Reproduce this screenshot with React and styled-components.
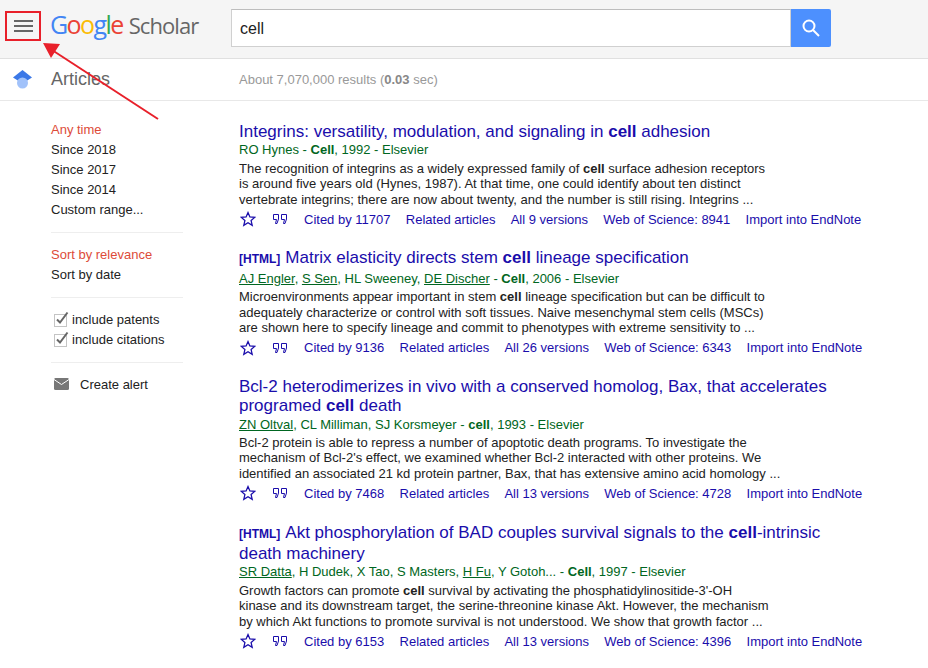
import { styled, createGlobalStyle } from 'styled-components'

const GlobalStyle = createGlobalStyle`
  * {
    margin: 0;
    padding: 0;
    box-sizing: border-box;
  }
  html, body {
    background: #fff;
    overflow: hidden;
  }
  body {
    font-family: 'Liberation Sans', Arial, sans-serif;
    font-size: 13px;
    color: #222;
  }
`

const Page = styled.div`
  position: relative;
  width: 928px;
  height: 668px;
  overflow: hidden;
`
const Header = styled.header`
  height: 59px;
  background: #f5f5f5;
  border-bottom: 1px solid #e0e0e0;
  display: flex;
  align-items: flex-start;
`
const MenuBox = styled.div`
  width: 36px;
  height: 30px;
  margin: 11px 0 0 5px;
  border: 2px solid #e8202a;
  display: flex;
  align-items: center;
  justify-content: center;
`
const Logo = styled.div`
  margin: 9px 0 0 9px;
  width: 181px;
  font-family: 'Open Sans', sans-serif;
  font-size: 22px;
  line-height: 30px;
  letter-spacing: -0.9px;
  white-space: nowrap;
  color: #666;
`
const GoogleWord = styled.span`
  font-size: 25px;
  font-weight: 500;
  letter-spacing: -1.6px;
  margin-right: 6px;
`
const Letter = styled.span`
  color: ${(p) => p.$c};
`
const SearchBox = styled.div`
  margin: 9px 0 0 0;
  width: 560px;
  height: 38px;
  border: 1px solid #d0d0d0;
  border-top-color: #bdbdbd;
  background: #fff;
  font-size: 16px;
  line-height: 38px;
  padding-left: 8px;
  color: #222;
`
const SearchButton = styled.div`
  margin-top: 9px;
  width: 40px;
  height: 38px;
  background: #4d90fe;
  border-radius: 0 2px 2px 0;
  display: flex;
  align-items: center;
  justify-content: center;
`
const SubBar = styled.div`
  height: 42px;
  border-bottom: 1px solid #e8e8e8;
  display: flex;
  align-items: center;
`
const CapIcon = styled.svg`
  margin-left: 13px;
  width: 20px;
  height: 20px;
`
const SubTitle = styled.div`
  margin-left: 18px;
  width: 188px;
  font-size: 18px;
  color: #666;
`
const Count = styled.div`
  color: #999;
  b {
    color: #888;
  }
`
const Body = styled.div`
  display: flex;
`
const Sidebar = styled.aside`
  margin-left: 51px;
  width: 132px;
  padding-top: 19px;
`
const SideGroup = styled.div`
  padding-bottom: 12px;
  margin-bottom: 12px;
  border-bottom: 1px solid #eee;
`
const CheckGroup = styled(SideGroup)`
  margin-top: -1px;
  padding-bottom: 13px;
  margin-bottom: 11px;
`
const SideItem = styled.div`
  height: 20px;
  line-height: 20px;
  color: ${(p) => (p.$active ? '#dd4b39' : '#222')};
  white-space: nowrap;
`
const CheckRow = styled.div`
  height: 20px;
  display: flex;
  align-items: center;
  gap: 3px;
  padding-left: 2px;
`
const CheckIcon = styled.svg`
  width: 16px;
  height: 16px;
`
const AlertRow = styled.div`
  height: 20px;
  display: flex;
  align-items: center;
  gap: 11px;
  padding-left: 3px;
`
const Results = styled.main`
  margin-left: 56px;
  width: 640px;
  padding-top: 21px;
`
const Result = styled.article`
  margin-bottom: 19.4px;
`
const Title = styled.h3`
  font-weight: normal;
  font-size: 17px;
  line-height: 19.3px;
  color: #1a0dab;
  b {
    font-weight: bold;
  }
`
const Tag = styled.span`
  font-size: 12px;
  font-weight: bold;
  margin-right: 5px;
`
const Authors = styled.div`
  line-height: 17px;
  color: #006621;
  b {
    font-weight: bold;
  }
  u {
    text-decoration: underline;
  }
`
const Snippet = styled.div`
  margin-top: 2.4px;
  line-height: 15.6px;
  color: #222;
  white-space: pre;
  b {
    font-weight: bold;
  }
`
const Actions = styled.div`
  margin-top: 1.6px;
  height: 20px;
  display: flex;
  align-items: center;
  color: #1a0dab;
  white-space: nowrap;
`
const ActionIcon = styled.svg`
  flex: none;
  width: 16px;
  height: 16px;
  margin-left: ${(p) => p.$left}px;
`
const ActionLink = styled.span`
  margin-left: ${(p) => p.$left || 15.3}px;
`
const ArrowSvg = styled.svg`
  position: absolute;
  left: 0;
  top: 0;
  width: 200px;
  height: 140px;
  pointer-events: none;
`

const results = [
  {
    title: <>Integrins: versatility, modulation, and signaling in <b>cell</b> adhesion</>,
    authors: <>RO Hynes - <b>Cell</b>, 1992 - Elsevier</>,
    snippet: <>The recognition of integrins as a widely expressed family of <b>cell</b> surface adhesion receptors{'\n'}is around five years old (Hynes, 1987). At that time, one could identify about ten distinct{'\n'}vertebrate integrins; there are now about twenty, and the number is still rising. Integrins ...</>,
    cited: 11707, versions: 9, wos: 8941,
  },
  {
    tag: true,
    title: <>Matrix elasticity directs stem <b>cell</b> lineage specification</>,
    authors: <><u>AJ Engler</u>, <u>S Sen</u>, HL Sweeney, <u>DE Discher</u> - <b>Cell</b>, 2006 - Elsevier</>,
    snippet: <>Microenvironments appear important in stem <b>cell</b> lineage specification but can be difficult to{'\n'}adequately characterize or control with soft tissues. Naive mesenchymal stem cells (MSCs){'\n'}are shown here to specify lineage and commit to phenotypes with extreme sensitivity to ...</>,
    cited: 9136, versions: 26, wos: 6343,
  },
  {
    title: <>Bcl-2 heterodimerizes in vivo with a conserved homolog, Bax, that accelerates<br />programed <b>cell</b> death</>,
    authors: <><u>ZN Oltval</u>, CL Milliman, SJ Korsmeyer - <b>cell</b>, 1993 - Elsevier</>,
    snippet: <>Bcl-2 protein is able to repress a number of apoptotic death programs. To investigate the{'\n'}mechanism of Bcl-2's effect, we examined whether Bcl-2 interacted with other proteins. We{'\n'}identified an associated 21 kd protein partner, Bax, that has extensive amino acid homology ...</>,
    cited: 7468, versions: 13, wos: 4728,
  },
  {
    tag: true,
    title: <>Akt phosphorylation of BAD couples survival signals to the <b>cell</b>-intrinsic<br />death machinery</>,
    authors: <><u>SR Datta</u>, H Dudek, X Tao, S Masters, <u>H Fu</u>, Y Gotoh... - <b>Cell</b>, 1997 - Elsevier</>,
    snippet: <>Growth factors can promote <b>cell</b> survival by activating the phosphatidylinositide-3'-OH{'\n'}kinase and its downstream target, the serine-threonine kinase Akt. However, the mechanism{'\n'}by which Akt functions to promote survival is not understood. We show that growth factor ...</>,
    cited: 6153, versions: 13, wos: 4396,
  },
]

function Check() {
  return (
    <CheckIcon viewBox="0 0 16 16">
      <rect x="1.5" y="3.5" width="12" height="12" fill="#fff" stroke="#c4c4c4" />
      <path d="M4 8.5l3 3L14.5 1.5" fill="none" stroke="#666" strokeWidth="2" />
    </CheckIcon>
  )
}

export default function App() {
  return (
    <Page>
      <GlobalStyle />
      <Header>
        <MenuBox>
          <svg width="19" height="12" viewBox="0 0 19 12">
            <path d="M0 1h19M0 6h19M0 11h19" stroke="#666" strokeWidth="2" />
          </svg>
        </MenuBox>
        <Logo>
          <GoogleWord>
            <Letter $c="#4285f4">G</Letter>
            <Letter $c="#ea4335">o</Letter>
            <Letter $c="#fbbc05">o</Letter>
            <Letter $c="#4285f4">g</Letter>
            <Letter $c="#34a853">l</Letter>
            <Letter $c="#ea4335">e</Letter>
          </GoogleWord>
          Scholar
        </Logo>
        <SearchBox>cell</SearchBox>
        <SearchButton>
          <svg width="20" height="20" viewBox="0 0 20 20">
            <circle cx="8" cy="8" r="5.5" fill="none" stroke="#fff" strokeWidth="2" />
            <path d="M12 12l6 6" stroke="#fff" strokeWidth="2" />
          </svg>
        </SearchButton>
      </Header>
      <SubBar>
        <CapIcon viewBox="0 0 20 20">
          <path d="M9.5 0l9.5 7.500-9.500 6-9.500-6z" fill="#3b78e7" />
          <circle cx="9.500" cy="13" r="5.500" fill="#a1c2fa" />
        </CapIcon>
        <SubTitle>Articles</SubTitle>
        <Count>About 7,070,000 results (<b>0.03</b> sec)</Count>
      </SubBar>
      <Body>
        <Sidebar>
          <SideGroup>
            <SideItem $active>Any time</SideItem>
            <SideItem>Since 2018</SideItem>
            <SideItem>Since 2017</SideItem>
            <SideItem>Since 2014</SideItem>
            <SideItem>Custom range...</SideItem>
          </SideGroup>
          <SideGroup>
            <SideItem $active>Sort by relevance</SideItem>
            <SideItem>Sort by date</SideItem>
          </SideGroup>
          <CheckGroup>
            <CheckRow><Check />include patents</CheckRow>
            <CheckRow><Check />include citations</CheckRow>
          </CheckGroup>
          <AlertRow>
            <svg width="15" height="12" viewBox="0 0 15 12">
              <rect width="15" height="12" rx="1.5" fill="#777" />
              <path d="M0 1.5l7.500 5 7.500-5" fill="none" stroke="#fff" strokeWidth="1" />
            </svg>
            Create alert
          </AlertRow>
        </Sidebar>
        <Results>
          {results.map((r) => (
            <Result key={r.cited}>
              <Title>{r.tag && <Tag>[HTML]</Tag>}{r.title}</Title>
              <Authors>{r.authors}</Authors>
              <Snippet>{r.snippet}</Snippet>
              <Actions>
                <ActionIcon $left={1} viewBox="0 0 16 16">
                  <path d="M8 1.600l1.900 4.400 4.800.4-3.600 3.200 1.100 4.700L8 11.800l-4.200 2.500 1.100-4.700-3.600-3.200 4.800-.4z" fill="none" stroke="#1a0dab" strokeWidth="1.300" />
                </ActionIcon>
                <ActionIcon $left={16} viewBox="0 0 16 16">
                  <path d="M1.500 3.500h5v4.500l-1.500 4.500h-1.500l1-4h-3zM9.500 3.500h5v4.500l-1.500 4.500h-1.500l1-4h-3z" fill="none" stroke="#1a0dab" strokeWidth="1" />
                </ActionIcon>
                <ActionLink $left={16}>Cited by {r.cited}</ActionLink>
                <ActionLink>Related articles</ActionLink>
                <ActionLink>All {r.versions} versions</ActionLink>
                <ActionLink>Web of Science: {r.wos}</ActionLink>
                <ActionLink>Import into EndNote</ActionLink>
              </Actions>
            </Result>
          ))}
        </Results>
      </Body>
      <ArrowSvg viewBox="0 0 200 140">
        <path d="M158 119L52 50" stroke="#e8202a" strokeWidth="2" />
        <path d="M43 43l17 1-9 14z" fill="#e8202a" />
      </ArrowSvg>
    </Page>
  )
}
